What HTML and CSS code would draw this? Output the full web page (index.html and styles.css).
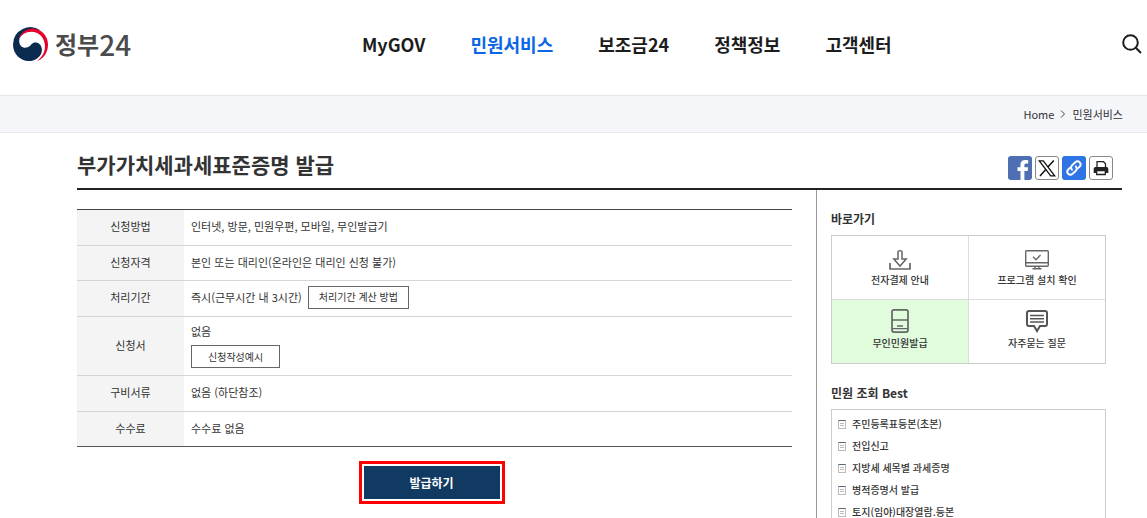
FILE: index.html
```html
<!DOCTYPE html>
<html lang="ko">
<head>
<meta charset="utf-8">
<title>부가가치세과세표준증명 발급 | 정부24</title>
<link rel="stylesheet" href="styles.css">
</head>
<body>
<header class="header">
  <a class="logo" href="#">
    <svg class="logo-mark" viewBox="0 0 34 34" aria-hidden="true">
      <path fill="#0b2b50" d="M27 3.500A17 17 0 0 0 0 17C0 26.500 7.500 33 15 33C19 33 22 32 24 30C27 28 28.500 24.500 28 21C27.500 17 24.500 14.500 21 15C17.500 15.500 17.500 19 13 20C9 20.500 6 18 6 13C6.500 7 12 3 18 2.500C22 2.200 25 3 27 3.500Z"/>
      <path fill="#e4002b" d="M6 12C7 5.500 13 1.500 19 1.500C28 2 34 9 34 17C34 25 29.500 31 23.500 33C28.500 29 31.500 24 31 17.500C30.500 10 25 4.500 18 4.500C12 4.500 8 7.500 6 12Z"/>
    </svg>
    <span class="logo-text">정부<span class="logo-num">24</span></span>
  </a>
  <nav class="nav">
    <a href="#">MyGOV</a>
    <a href="#" class="active">민원서비스</a>
    <a href="#">보조금24</a>
    <a href="#">정책정보</a>
    <a href="#">고객센터</a>
  </nav>
  <button class="search" type="button" aria-label="검색">
    <svg viewBox="0 0 20 20" fill="none" stroke="#1d1d1d" stroke-width="2"><circle cx="8.500" cy="8.500" r="7.300"/><path d="M13.800 13.800L19 19"/></svg>
  </button>
</header>

<div class="crumbs">
  <a href="#">Home</a>
  <svg viewBox="0 0 6 8" fill="none" stroke="#444"><path d="M1 .5L4.500 4L1 7.500"/></svg>
  <a href="#">민원서비스</a>
</div>

<div class="page">
  <div class="title-row">
    <h1>부가가치세과세표준증명 발급</h1>
    <div class="share">
      <button type="button" class="fb" aria-label="페이스북">
        <svg viewBox="0 0 24 24"><path fill="#fff" d="M12.500 24V15H9.500V11.300H12.500V8.500C12.500 5.300 14.500 4 17.300 4C18.500 4 19.700 4.100 20.200 4.200V7.600H18.200C16.800 7.600 16.400 8.300 16.400 9.400V11.300H20.100L19.600 15H16.400V24Z"/></svg>
      </button>
      <button type="button" class="outline" aria-label="X">
        <svg viewBox="1 1 22 22" fill="none" stroke="#111"><path stroke-width="1.300" d="M4.300 4.800H8.300L19.700 19.800H15.700Z"/><path stroke-width="1.500" d="M18.800 4.500L12.900 11.100M11 13.300L5 20"/></svg>
      </button>
      <button type="button" class="link" aria-label="링크 복사">
        <svg viewBox="0 0 24 24" fill="none" stroke="#fff" stroke-width="1.900" stroke-linecap="round"><path d="M10 13.800C8.600 12.100 8.900 10.500 10 9.400L13.300 6.300C14.700 5.100 16.500 5.200 17.700 6.300C18.900 7.600 18.900 9.300 17.700 10.600L15.800 12.400"/><path d="M13.800 10.400C15.200 12 15 13.600 13.900 14.700L10.600 17.800C9.200 19 7.400 18.900 6.200 17.800C5 16.500 5 14.800 6.200 13.500L8.100 11.700"/></svg>
      </button>
      <button type="button" class="outline" aria-label="인쇄">
        <svg viewBox="1 1 22 22"><path fill="#fff" stroke="#222" stroke-width="1.300" d="M8 12V5.700H14.500L16.500 7.700V12"/><path fill="#222" d="M6.500 11H17.500Q19.300 11 19.300 12.800V17H4.700V12.800Q4.700 11 6.500 11Z"/><path fill="#fff" stroke="#222" stroke-width="1.300" d="M7.700 14.700H16.300V18.500H7.700Z"/></svg>
      </button>
    </div>
  </div>

  <div class="columns">
    <main class="main">
      <table class="info">
        <tbody>
          <tr><th scope="row">신청방법</th><td>인터넷, 방문, 민원우편, 모바일, 무인발급기</td></tr>
          <tr><th scope="row">신청자격</th><td>본인 또는 대리인(온라인은 대리인 신청 불가)</td></tr>
          <tr><th scope="row">처리기간</th><td><div class="inline"><span>즉시(근무시간 내 3시간)</span><button type="button" class="small-btn">처리기간 계산 방법</button></div></td></tr>
          <tr class="tall"><th scope="row">신청서</th><td><div class="stack"><span>없음</span><button type="button" class="small-btn sample">신청작성예시</button></div></td></tr>
          <tr><th scope="row">구비서류</th><td>없음 (하단참조)</td></tr>
          <tr><th scope="row">수수료</th><td>수수료 없음</td></tr>
        </tbody>
      </table>
      <div class="action"><div class="highlight"><button type="button" class="issue">발급하기</button></div></div>
    </main>

    <aside class="side">
      <h2>바로가기</h2>
      <div class="quick">
        <a href="#">
          <svg viewBox="0 0 24 24" fill="none" stroke="#666" stroke-width="1.500"><path d="M10 3.500Q10 2.700 12 2.700Q14 2.700 14 3.500V11H18.200L12 18L5.800 11H10Z"/><path stroke-width="1.700" d="M2 15V21H22V15"/></svg>
          전자결제 안내
        </a>
        <a href="#">
          <svg viewBox="0 0 24 24" fill="none" stroke="#666" stroke-width="1.400"><rect x=".7" y="2.700" width="22.600" height="15.600" rx="1"/><path d="M1 14.800H23M8 8.800L11 11.800L15.500 7M10 18V20.500M14 18V20.500M7.500 20.800H16.500"/></svg>
          프로그램 설치 확인
        </a>
        <a href="#" class="on">
          <svg viewBox="0 0 24 24" fill="none" stroke="#666" stroke-width="1.700"><rect x="4" y=".9" width="16" height="22.200" rx="2"/><path stroke-width="1.300" d="M4 11H20M9 17H15M4 19.700H20"/></svg>
          무인민원발급
        </a>
        <a href="#">
          <svg viewBox="0 0 24 24" fill="none" stroke="#555" stroke-width="2"><path d="M4 2H20Q22 2 22 4V15Q22 17 20 17H15L12 22L9 17H4Q2 17 2 15V4Q2 2 4 2Z"/><path stroke-width="1.600" d="M5 6.500H19M5 9.800H19M5 13H19"/></svg>
          자주묻는 질문
        </a>
      </div>
      <h2>민원 조회 Best</h2>
      <ul class="best">
        <li><a href="#">주민등록표등본(초본)</a></li>
        <li><a href="#">전입신고</a></li>
        <li><a href="#">지방세 세목별 과세증명</a></li>
        <li><a href="#">병적증명서 발급</a></li>
        <li><a href="#">토지(임야)대장열람.등본</a></li>
      </ul>
    </aside>
  </div>
</div>
</body>
</html>
```
FILE: styles.css
```css
*, *::before { box-sizing: border-box; }
body {
  margin: 0;
  height: 100vh;
  overflow: hidden;
  background: #fff;
  color: #333;
  font-family: "Noto Sans CJK KR", sans-serif;
  font-size: 11px;
  line-height: 16px;
}
a { color: inherit; text-decoration: none; }
button { margin: 0; padding: 0; font: inherit; color: inherit; background: none; border: 0; cursor: pointer; }
svg { display: block; }

.header {
  display: flex;
  align-items: center;
  height: 96px;
  padding: 0 5px 7px 13px;
  border-bottom: 1px solid #e3e6ea;
}
.logo { display: flex; align-items: center; gap: 7px; width: 118px; color: #4b4b4d; }
.logo-mark { width: 35px; height: 35px; flex: none; }
.logo-text { display: flex; align-items: center; font-size: 24px; font-weight: 700; line-height: 34px; white-space: nowrap; }
.logo-num { font-size: 28px; font-weight: 500; }
.nav { display: flex; gap: 45px; margin-left: 231px; font-size: 18px; line-height: 28px; font-weight: 700; color: #1d1d1d; white-space: nowrap; }
.nav .active { color: #0b66e4; }
.search { margin-left: auto; }
.search svg { width: 20px; height: 20px; }

.crumbs {
  display: flex;
  align-items: center;
  justify-content: flex-end;
  gap: 6px;
  height: 37px;
  padding-right: 24px;
  background: #f5f6fa;
  border-bottom: 1px solid #e8eaee;
}
.crumbs svg { width: 6px; height: 8px; }

.page { padding: 0 25px 0 77px; }
.title-row {
  display: flex;
  align-items: flex-end;
  justify-content: space-between;
  height: 57px;
  padding: 0 9px 8px 0;
  border-bottom: 2px solid #222;
}
h1 { margin: 0; font-size: 21px; line-height: 32px; font-weight: 700; }
.share { display: flex; gap: 3px; }
.share button { width: 24px; height: 24px; border-radius: 3px; overflow: hidden; }
.share svg { width: 100%; height: 100%; }
.share .fb { background: #4f6fb3; }
.share .link { background: #2f74e4; }
.share .outline { border: 1px solid #888; }

.columns { display: flex; align-items: stretch; }
.main { flex: 1; min-width: 0; padding: 19px 24px 40px 0; }
.info { width: 100%; border-collapse: collapse; border-top: 1px solid #444; border-bottom: 1px solid #555; }
.info th { width: 107px; padding: 0 0 3px; background: #f4f4f4; font-weight: 400; text-align: center; }
.info td { padding: 0 7px 3px; }
.info tr { height: 35px; }
.info tr:nth-child(odd) { height: 36px; }
.info .tall { height: 59px; }
.info tr + tr { border-top: 1px solid #d5d5d5; }
.inline { display: flex; align-items: center; gap: 6px; }
.stack { display: flex; flex-direction: column; align-items: flex-start; gap: 6px; padding-top: 2px; }
.small-btn { height: 23px; padding: 0 10px; border: 1px solid #666; font-size: 10px; line-height: 16px; }
.sample { padding: 0 16px; }
.action { display: flex; justify-content: center; padding: 14px 6px 0 0; }
.highlight { padding: 2px; border: 3px solid #f00; }
.issue { display: block; width: 136px; height: 33px; background: #103a62; color: #fff; font-size: 12px; font-weight: 700; }

.side { width: 306px; padding: 20px 16px 0 14px; border-left: 1px solid #999; }
.side h2 { margin: 0; font-size: 12px; line-height: 18px; font-weight: 700; }
.quick {
  display: grid;
  grid-template-columns: 1fr 1fr;
  gap: 1px;
  margin: 7px 0 20px;
  border: 1px solid #ccc;
  background: #ddd;
}
.quick a {
  display: flex;
  flex-direction: column;
  align-items: center;
  height: 63px;
  padding-top: 12px;
  background: #fff;
  font-size: 10px;
  font-weight: 500;
}
.quick svg { width: 24px; height: 24px; }
.quick .on { background: #e0fcdd; }
.quick a:nth-child(n+3) { padding-top: 9px; }
.quick a:nth-child(n+3) svg { margin-bottom: 2px; }
.best { margin: 7px 0 0; padding: 3px 6px 8px; border: 1px solid #ccc; list-style: none; font-size: 10px; line-height: 22px; font-weight: 500; }
.best li { display: flex; align-items: center; gap: 6px; }
.best li::before {
  content: "";
  width: 8px;
  height: 9px;
  padding: 1px;
  border: 1px solid #bbb;
  border-top-color: #567;
  background: repeating-linear-gradient(#fff 0 1px, #bbb 1px 2px) content-box;
}
```
